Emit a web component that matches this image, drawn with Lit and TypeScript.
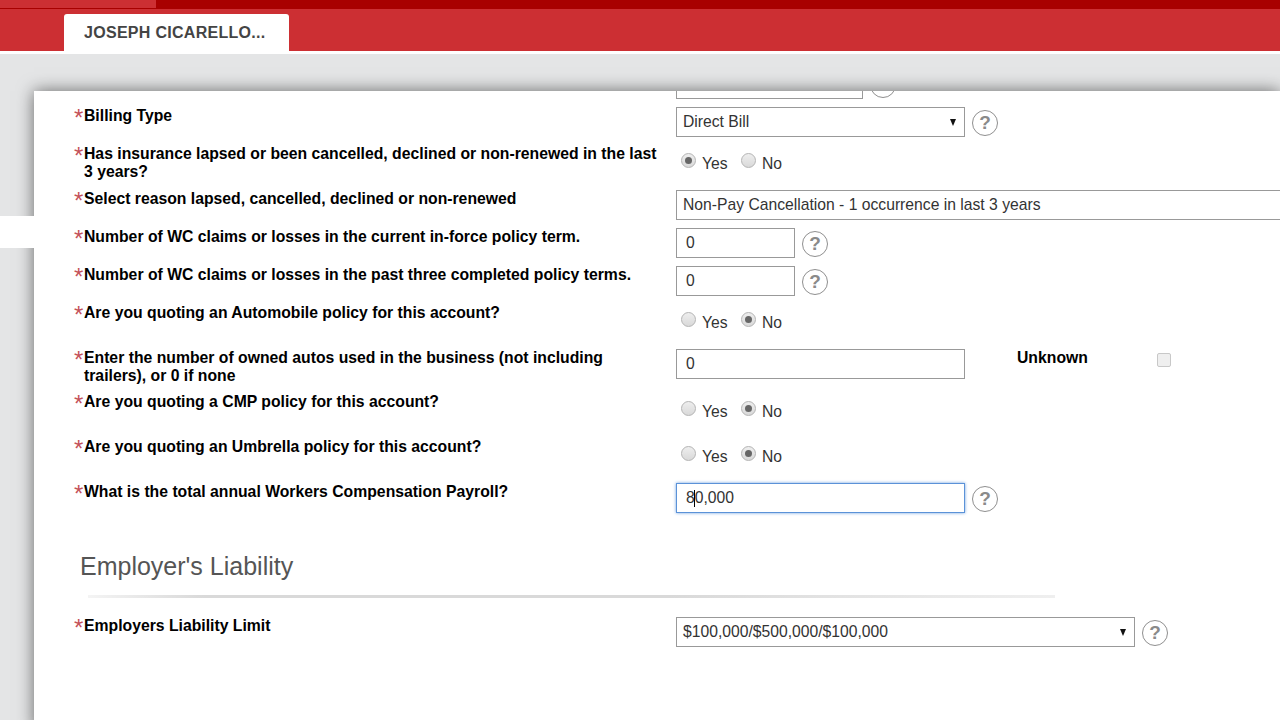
import { LitElement, html, css } from 'lit';
import { customElement } from 'lit/decorators.js';

@customElement('app-root')
export class AppRoot extends LitElement {
    static override styles = css`
    :host {
      display: block;
      width: 1280px;
      height: 720px;
      overflow: hidden;
      background: #e4e5e6;
      font-family: "Liberation Sans", Arial, sans-serif;
      color: #000;
    }
    .top-strip {
      display: flex;
      height: 9px;
      background: #a80000;
    }
    .top-strip .left {
      width: 156px;
      background: #cc2f33;
      border-bottom: 1px solid #a80000;
      box-sizing: border-box;
    }
    .tab-bar {
      height: 42px;
      padding-left: 64px;
      display: flex;
      align-items: flex-end;
      background: #cc2f33;
    }
    .tab {
      width: 225px;
      height: 37px;
      box-sizing: border-box;
      padding-left: 20px;
      display: flex;
      align-items: center;
      background: #fff;
      border-radius: 3px 3px 0 0;
      color: #444;
      font-size: 16px;
      font-weight: bold;
      letter-spacing: 0.29px;
    }
    .tab-edge {
      height: 3px;
      background: #fff;
    }
    .main {
      display: flex;
      height: 666px;
      padding-top: 37px;
      box-sizing: border-box;
    }
    .gutter {
      width: 34px;
      flex: none;
      padding-top: 125px;
      position: relative;
      z-index: 1;
    }
    .notch {
      height: 32px;
      background: #fff;
    }
    .panel {
      flex: 1;
      height: 640px;
      background: #fff;
      box-shadow: 0 0 16px rgba(0, 0, 0, 0.55);
      overflow: hidden;
      position: relative;
    }
    .scroll {
      margin-top: -22px;
      padding-left: 40px;
    }
    .row {
      display: flex;
      align-items: flex-start;
    }
    .label {
      width: 602px;
      flex: none;
      display: flex;
      font-size: 15.75px;
      line-height: 18px;
      font-weight: bold;
    }
    .star {
      width: 10px;
      flex: none;
      color: #c4525a;
      font-weight: normal;
      font-size: 24px;
      line-height: 22px;
      height: 18px;
    }
    .label span:last-child {
      width: 575px;
    }
    .field {
      box-sizing: border-box;
      height: 30px;
      border: 1px solid #999;
      background: #fff;
      padding: 0 6px;
      display: flex;
      align-items: center;
      font-size: 15.7px;
      color: #333;
      white-space: nowrap;
      flex: none;
    }
    .w-sm { width: 119px; padding-left: 9px; }
    .w-sm-wide { width: 187px; }
    .w-md { width: 289px; }
    .w-lg { width: 459px; }
    .w-full { width: 640px; }
    .pad { padding-left: 9px; }
    .focus {
      border: 1px solid #5b92d8;
      box-shadow: 0 0 3px #6ea0e0;
    }
    .caret {
      display: inline-block;
      width: 1px;
      height: 17px;
      background: #000;
      margin: 0 0 0 -1px;
    }
    .arrow {
      margin-left: auto;
      margin-right: 2px;
      width: 0;
      height: 0;
      border-left: 3.5px solid transparent;
      border-right: 3.5px solid transparent;
      border-top: 7px solid #111;
    }
    .help {
      box-sizing: border-box;
      width: 26px;
      height: 26px;
      margin: 3px 0 0 7px;
      border: 1.5px solid #8f8f8f;
      border-radius: 50%;
      display: flex;
      align-items: center;
      justify-content: center;
      color: #8a8a8a;
      font-size: 19px;
      font-weight: bold;
      flex: none;
    }
    .radios {
      display: flex;
      padding-left: 5px;
      font-size: 15.7px;
      color: #333;
      height: 30px;
    }
    .radio {
      display: flex;
      align-items: flex-start;
      width: 60px;
    }
    .dot {
      box-sizing: border-box;
      width: 15px;
      height: 15px;
      margin-top: 8px;
      margin-right: 6px;
      border-radius: 50%;
      border: 1px solid #b4b4b4;
      background: linear-gradient(#eee, #d9d9d9);
      display: flex;
      align-items: center;
      justify-content: center;
    }
    .dot.on::after {
      content: "";
      width: 7px;
      height: 7px;
      border-radius: 50%;
      background: #666;
    }
    .radio-text {
      margin-top: 10px;
      line-height: 18px;
    }
    .unknown {
      width: 140px;
      margin-left: 52px;
      font-size: 15.75px;
      line-height: 18px;
      font-weight: bold;
      flex: none;
    }
    .check {
      box-sizing: border-box;
      width: 14px;
      height: 14px;
      margin-top: 4px;
      border: 1px solid #c8c8c8;
      border-radius: 2px;
      background: #efefef;
    }
    .heading {
      margin: 0;
      padding-left: 6px;
      font-size: 25px;
      line-height: 30px;
      font-weight: normal;
      color: #555;
    }
    .rule {
      width: 967px;
      height: 3px;
      margin: 14px 0 19px 14px;
      background: linear-gradient(90deg, #f4f4f4, #d9d9d9 12%, #d9d9d9 60%, #efefef);
    }
    `;

    private _label(text: string) {
        return html`<div class="label"><span class="star">*</span><span>${text}</span></div>`;
    }

    private _radios(yes: boolean) {
        return html`
      <div class="radios">
        <div class="radio"><span class="dot ${yes ? 'on' : ''}"></span><span class="radio-text">Yes</span></div>
        <div class="radio"><span class="dot ${yes ? '' : 'on'}"></span><span class="radio-text">No</span></div>
      </div>
    `;
    }

    private _help() {
        return html`<div class="help">?</div>`;
    }

    override render() {
        return html`
      <div class="top-strip"><div class="left"></div></div>
      <div class="tab-bar"><div class="tab">JOSEPH CICARELLO...</div></div>
      <div class="tab-edge"></div>
      <div class="main">
        <div class="gutter"><div class="notch"></div></div>
        <div class="panel">
          <div class="scroll">
            <div class="row" style="height:38px">
              <div class="label"></div>
              <div class="field w-sm-wide"></div>
              ${this._help()}
            </div>
            <div class="row" style="height:38px">
              ${this._label('Billing Type')}
              <div class="field w-md">Direct Bill<span class="arrow"></span></div>
              ${this._help()}
            </div>
            <div class="row" style="height:45px">
              ${this._label('Has insurance lapsed or been cancelled, declined or non-renewed in the last 3 years?')}
              ${this._radios(true)}
            </div>
            <div class="row" style="height:38px">
              ${this._label('Select reason lapsed, cancelled, declined or non-renewed')}
              <div class="field w-full">Non-Pay Cancellation - 1 occurrence in last 3 years</div>
            </div>
            <div class="row" style="height:38px">
              ${this._label('Number of WC claims or losses in the current in-force policy term.')}
              <div class="field w-sm">0</div>
              ${this._help()}
            </div>
            <div class="row" style="height:38px">
              ${this._label('Number of WC claims or losses in the past three completed policy terms.')}
              <div class="field w-sm">0</div>
              ${this._help()}
            </div>
            <div class="row" style="height:45px">
              ${this._label('Are you quoting an Automobile policy for this account?')}
              ${this._radios(false)}
            </div>
            <div class="row" style="height:44px">
              ${this._label('Enter the number of owned autos used in the business (not including trailers), or 0 if none')}
              <div class="field w-md pad">0</div>
              <div class="unknown">Unknown</div>
              <div class="check"></div>
            </div>
            <div class="row" style="height:45px">
              ${this._label('Are you quoting a CMP policy for this account?')}
              ${this._radios(false)}
            </div>
            <div class="row" style="height:45px">
              ${this._label('Are you quoting an Umbrella policy for this account?')}
              ${this._radios(false)}
            </div>
            <div class="row" style="height:68px">
              ${this._label('What is the total annual Workers Compensation Payroll?')}
              <div class="field w-md pad focus">8<span class="caret"></span>0,000</div>
              ${this._help()}
            </div>
            <h2 class="heading">Employer's Liability</h2>
            <div class="rule"></div>
            <div class="row" style="height:38px">
              ${this._label('Employers Liability Limit')}
              <div class="field w-lg">$100,000/$500,000/$100,000<span class="arrow"></span></div>
              ${this._help()}
            </div>
          </div>
        </div>
      </div>
    `;
    }
}
